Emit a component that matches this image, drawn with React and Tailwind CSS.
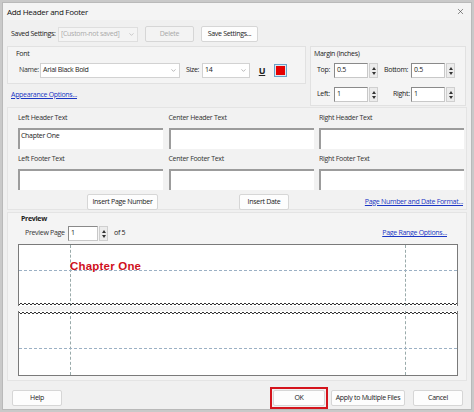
import { X, ChevronDown } from "lucide-react";

function Btn({ children, className = "", disabled }) {
  return (
    <div
      className={`flex h-[16px] items-center justify-center rounded-[2px] border border-[#d6d6d6] ${
        disabled ? "bg-[#f3f3f3] text-[#a8a8a8]" : "bg-[#fdfdfd] text-[#222]"
      } ${className}`}
    >
      {children}
    </div>
  );
}

function Spin() {
  return (
    <div className="ml-[1px] flex h-[15px] w-[9px] flex-col items-center justify-center gap-[2px] border border-[#cfcfcf] bg-[#ececec]">
      <div className="h-0 w-0 border-x-[2px] border-b-[3px] border-x-transparent border-b-[#333]" />
      <div className="h-0 w-0 border-x-[2px] border-t-[3px] border-x-transparent border-t-[#333]" />
    </div>
  );
}

function Field({ value, className = "" }) {
  return (
    <div
      className={`flex h-[15px] items-center border border-[#c8c8c8] border-l-[#8a8a8a] border-t-[#8a8a8a] bg-white pl-[2px] text-[#222] ${className}`}
    >
      {value}
    </div>
  );
}

function TextBox({ label, value }) {
  return (
    <div className="flex w-[145px] flex-col">
      <div className="h-[11px] leading-[11px] text-[#333]">{label}</div>
      <div className="mt-[5px] h-[21px] border-l-2 border-t-2 border-[#9c9c9c] bg-white pl-[1px] pt-[1px] text-[#222]">
        {value}
      </div>
    </div>
  );
}

function Wave({ flip }) {
  return (
    <svg width="438" height="4" className="block">
      <defs>
        <pattern id={flip ? "wv2" : "wv1"} width="4" height="4" patternUnits="userSpaceOnUse">
          <path
            d={flip ? "M0 1 L2 3 L4 1" : "M0 3 L2 1 L4 3"}
            fill="none"
            stroke="#333"
            strokeWidth="1"
          />
        </pattern>
      </defs>
      <rect width="438" height="4" fill={`url(#${flip ? "wv2" : "wv1"})`} />
    </svg>
  );
}

function PreviewPage({ top }) {
  return (
    <div
      className={`relative w-[440px] border-[#7a7a7a] bg-white ${
        top ? "h-[62px] border-l border-r border-t" : "h-[65px] border-b border-l border-r"
      }`}
    >
      <div className="absolute bottom-0 left-[51px] top-0 border-l border-dashed border-[#9aa]" />
      <div className="absolute bottom-0 left-[386px] top-0 border-l border-dashed border-[#9aa]" />
      <div
        className={`absolute left-0 right-0 border-t border-dashed border-[#9bb0c4] ${
          top ? "top-[25px]" : "top-[37px]"
        }`}
      />
      {top && (
        <div className="absolute left-[51px] top-[13px] font-['Liberation_Sans',sans-serif] text-[11.5px] font-bold tracking-[0.2px] text-[#d0101c]">
          Chapter One
        </div>
      )}
      <div className={`absolute left-0 right-0 ${top ? "bottom-0" : "top-0"}`}>
        <Wave flip={!top} />
      </div>
    </div>
  );
}

export default function App() {
  return (
    <div className="h-[412px] w-[474px] bg-[#c9c9c9] p-[2px] font-['Open_Sans',sans-serif] text-[7px] tracking-[-0.3px] text-[#222]">
      <div className="flex h-full flex-col border border-[#b9b9b9] bg-[#f0f0f0]">
        <div className="flex h-[20px] items-center justify-between bg-[#f4f4f4] pl-[4px] pr-[6px]">
          <span className="text-[8px] text-[#111]">Add Header and Footer</span>
          <X size={9} strokeWidth={1.6} className="text-[#444]" />
        </div>

        <div className="flex flex-col px-[4px]">
          <div className="mt-[6px] flex h-[16px] items-center">
            <span className="ml-[4px] w-[46px]">Saved Settings:</span>
            <div className="ml-[1px] flex h-[15px] w-[80px] items-center justify-between border border-[#dedede] bg-[#f4f4f4] px-[2px] text-[#aaa]">
              <span>[Custom-not saved]</span>
              <ChevronDown size={7} className="text-[#aaa]" />
            </div>
            <Btn disabled className="ml-[7px] w-[49px]">Delete</Btn>
            <Btn className="ml-[7px] w-[57px]">Save Settings...</Btn>
          </div>

          <div className="mt-[4px] flex gap-[4px]">
            <div className="flex w-[299px] flex-col">
              <div className="h-[38px] border border-[#e1e1e1] bg-[#f4f4f4] px-[8px] pt-[1px]">
                <div className="h-[12px] leading-[12px]">Font</div>
                <div className="mt-[3px] flex items-center">
                  <span className="ml-[3px] w-[21px] text-[#333]">Name:</span>
                  <div className="flex h-[15px] w-[140px] items-center justify-between border border-[#d2d2d2] bg-white px-[2px]">
                    <span>Arial Black Bold</span>
                    <ChevronDown size={7} className="text-[#888]" />
                  </div>
                  <span className="ml-[6px] w-[16px]">Size:</span>
                  <div className="flex h-[15px] w-[48px] items-center justify-between border border-[#d2d2d2] bg-white px-[2px]">
                    <span>14</span>
                    <ChevronDown size={7} className="text-[#888]" />
                  </div>
                  <span className="ml-[7px] w-[10px] text-center text-[9px] font-bold leading-none text-[#222] underline">
                    U
                  </span>
                  <div className="ml-[7px] flex h-[13px] w-[13px] items-center justify-center border border-[#6aa3c9] bg-[#dde8f0]">
                    <div className="h-[9px] w-[9px] bg-[#e60000]" />
                  </div>
                </div>
              </div>
              <span className="ml-[4px] mt-[6px] text-[#1a36c4] underline">Appearance Options...</span>
            </div>

            <div className="h-[60px] w-[156px] border border-[#e1e1e1] bg-[#f4f4f4] px-[3px] pt-[1px]">
              <div className="h-[12px] leading-[12px]">Margin (Inches)</div>
              <div className="mt-[3px] flex items-center">
                <span className="ml-[3px] w-[17px]">Top:</span>
                <Field value="0.5" className="w-[34px]" />
                <Spin />
                <span className="ml-[6px] w-[27px]">Bottom:</span>
                <Field value="0.5" className="w-[34px]" />
                <Spin />
              </div>
              <div className="mt-[9px] flex items-center">
                <span className="ml-[3px] w-[17px]">Left:</span>
                <Field value="1" className="w-[34px]" />
                <Spin />
                <span className="ml-[15px] w-[18px]">Right:</span>
                <Field value="1" className="w-[34px]" />
                <Spin />
              </div>
            </div>
          </div>

          <div className="mt-[1px] flex h-[103px] flex-col border border-[#e4e4e4] bg-[#f2f2f2] pl-[10px] pr-[2px] pt-[4px]">
            <div className="flex justify-between">
              <TextBox label="Left Header Text" value="Chapter One" />
              <TextBox label="Center Header Text" />
              <TextBox label="Right Header Text" />
            </div>
            <div className="mt-[4px] flex justify-between">
              <TextBox label="Left Footer Text" />
              <TextBox label="Center Footer Text" />
              <TextBox label="Right Footer Text" />
            </div>
            <div className="mt-[4px] flex items-center">
              <Btn className="ml-[69px] w-[71px]">Insert Page Number</Btn>
              <Btn className="ml-[81px] w-[50px]">Insert Date</Btn>
              <span className="ml-auto mr-[1px] text-[#1a36c4] underline">Page Number and Date Format...</span>
            </div>
          </div>

          <div className="mt-[2px] flex h-[169px] flex-col border border-[#e4e4e4] bg-[#f4f4f4] px-[10px] pt-[0px]">
            <div className="ml-[3px] h-[11px] font-bold leading-[11px]">Preview</div>
            <div className="mt-[2px] flex items-center">
              <span className="ml-[7px] w-[43px] text-[#333]">Preview Page</span>
              <Field value="1" className="w-[30px]" />
              <Spin />
              <span className="ml-[6px]">of 5</span>
              <span className="ml-auto mr-[9px] text-[#1a36c4] underline">Page Range Options...</span>
            </div>
            <div className="mt-[3px] flex flex-col gap-[5px]">
              <PreviewPage top />
              <PreviewPage />
            </div>
          </div>

          <div className="mt-[6px] flex items-center">
            <Btn className="ml-[5px] w-[50px]">Help</Btn>
            <div className="ml-auto border-2 border-[#d4141c] p-[1px]">
              <Btn className="w-[52px]">OK</Btn>
            </div>
            <Btn className="ml-[3px] w-[74px]">Apply to Multiple Files</Btn>
            <Btn className="ml-[8px] mr-[4px] w-[50px]">Cancel</Btn>
          </div>
        </div>
      </div>
    </div>
  );
}
